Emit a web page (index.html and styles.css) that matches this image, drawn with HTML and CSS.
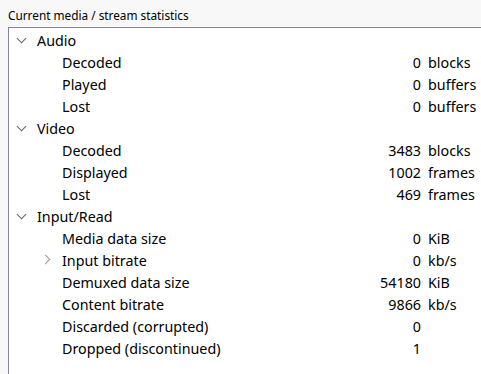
FILE: index.html
```html
<!doctype html>
<html>
	<head>
		<meta charset="utf-8" />
		<title>Statistics</title>
		<link rel="stylesheet" href="styles.css">
	</head>
	<body>
		<div class="caption">Current media / stream statistics</div>
		<div class="tree">
			<div class="row group"><span class="arrow down"></span><span class="label">Audio</span></div>
			<div class="row"><span class="label">Decoded</span><span class="value">0</span><span class="unit">blocks</span></div>
			<div class="row"><span class="label">Played</span><span class="value">0</span><span class="unit">buffers</span></div>
			<div class="row"><span class="label">Lost</span><span class="value">0</span><span class="unit">buffers</span></div>

			<div class="row group"><span class="arrow down"></span><span class="label">Video</span></div>
			<div class="row"><span class="label">Decoded</span><span class="value">3483</span><span class="unit">blocks</span></div>
			<div class="row"><span class="label">Displayed</span><span class="value">1002</span><span class="unit">frames</span></div>
			<div class="row"><span class="label">Lost</span><span class="value">469</span><span class="unit">frames</span></div>

			<div class="row group"><span class="arrow down"></span><span class="label">Input/Read</span></div>
			<div class="row"><span class="label">Media data size</span><span class="value">0</span><span class="unit">KiB</span></div>
			<div class="row"><span class="arrow right"></span><span class="label">Input bitrate</span><span class="value">0</span><span class="unit">kb/s</span></div>
			<div class="row"><span class="label">Demuxed data size</span><span class="value">54180</span><span class="unit">KiB</span></div>
			<div class="row"><span class="label">Content bitrate</span><span class="value">9866</span><span class="unit">kb/s</span></div>
			<div class="row"><span class="label">Discarded (corrupted)</span><span class="value">0</span><span class="unit"></span></div>
			<div class="row"><span class="label">Dropped (discontinued)</span><span class="value">1</span><span class="unit"></span></div>
		</div>
	</body>
</html>
```

FILE: styles.css
```css
html, body { margin: 0; padding: 0; }
body { background: #f8f8f8; font-family: "Noto Sans", sans-serif; color: #000; overflow: hidden; height: 374px; display: flex; flex-direction: column; }

.caption { font-size: 11.8px; line-height: 16px; padding: 7px 0 4px 8px; }

.tree { flex: 1; margin-left: 8px; background: #fff; border-top: 1px solid #828790; border-left: 1px solid #828790; padding-top: 1px; font-size: 14.3px; overflow: hidden; }

.row { display: flex; align-items: center; height: 22px; padding-left: 53px; position: relative; }
.row.group { padding-left: 28px; }
.label { flex: 1; white-space: nowrap; }
.value { width: 80px; text-align: right; }
.unit { width: 53px; margin-left: 7px; white-space: nowrap; }

.arrow { position: absolute; width: 6px; height: 6px; border-right: 1.3px solid #666; border-bottom: 1.3px solid #666; }
.arrow.down { left: 9px; top: 6px; transform: rotate(45deg); }
.arrow.right { left: 33px; top: 7px; transform: rotate(-45deg); border-color: #999; }
```
